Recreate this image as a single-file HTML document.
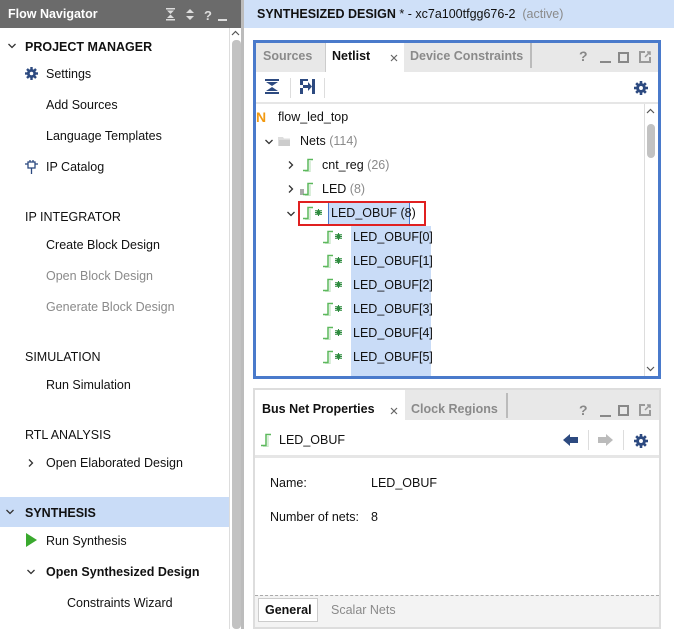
<!DOCTYPE html>
<html><head><style>
*{margin:0;padding:0;box-sizing:border-box}
body{width:674px;height:629px;overflow:hidden;background:#fff;font-family:"Liberation Sans",Arial,sans-serif;font-size:12.5px;color:#111;position:relative}
.a{position:absolute;white-space:nowrap}
.b{font-weight:bold}
.g{color:#8a8a8a}
</style></head><body>
<svg width="0" height="0" style="position:absolute">
<defs>
<symbol id="gear" viewBox="0 0 13 13"><circle cx="6.5" cy="6.5" r="4.5" fill="#2d4a80"/><g stroke="#2d4a80" stroke-width="2.4"><line x1="6.5" y1="0" x2="6.5" y2="13"/><line x1="0" y1="6.5" x2="13" y2="6.5"/><line x1="2" y1="2" x2="11" y2="11"/><line x1="11" y1="2" x2="2" y2="11"/></g><circle cx="6.5" cy="6.5" r="1.8" fill="#fff"/></symbol>
<symbol id="down" viewBox="0 0 10 10"><path d="M1.5 3 L5 6.5 L8.5 3" fill="none" stroke="#333" stroke-width="1.3"/></symbol>
<symbol id="right" viewBox="0 0 10 10"><path d="M3 1.5 L6.5 5 L3 8.5" fill="none" stroke="#333" stroke-width="1.3"/></symbol>
<symbol id="net" viewBox="0 0 12 14"><path d="M0 12.5 H5 V1.5 H10" fill="none" stroke="#5cb85c" stroke-width="1.5"/><path d="M2 14 H7 V3" fill="none" stroke="#b5deb5" stroke-width="1"/></symbol>
<symbol id="bug" viewBox="0 0 8 8"><g stroke="#2e8b3e" stroke-width="1.2"><line x1="0" y1="2" x2="8" y2="2"/><line x1="0" y1="4" x2="8" y2="4"/><line x1="0" y1="6" x2="8" y2="6"/><line x1="4" y1="0" x2="4" y2="8"/></g><circle cx="4" cy="4" r="2.2" fill="#2e8b3e"/></symbol>
</defs></svg>
<!-- left panel -->
<div class="a" style="left:0;top:0;width:242px;height:28px;background:#6b6b6b"></div>
<div class="a b" style="left:8px;top:7px;color:#fff;font-size:12.5px">Flow Navigator</div>
<svg class="a" style="left:166px;top:8px" width="62" height="13">
<g fill="#ddd"><rect x="0" y="0" width="9" height="1.5"/><rect x="0" y="11" width="9" height="1.5"/><polygon points="1,2.5 8,2.5 4.5,6"/><polygon points="1,10 8,10 4.5,6.5"/>
<polygon points="20,5 24,1 28,5"/><polygon points="20,8 24,12 28,8"/></g>
<text x="38" y="12" fill="#ddd" font-size="13" font-weight="bold" font-family="Liberation Sans">?</text>
<rect x="52" y="11" width="9" height="2" fill="#ddd"/></svg>
<div class="a" style="left:229px;top:28px;width:13px;height:601px;background:#fff;border-left:1px solid #ddd"></div>
<div class="a" style="left:232px;top:40px;width:9px;height:589px;background:#c2c2c2;border-radius:4px"></div>
<svg class="a" style="left:231px;top:30px" width="9" height="6"><path d="M1 5 L4.5 1.5 L8 5" fill="none" stroke="#555" stroke-width="1.2"/></svg>
<div class="a" style="left:241px;top:0;width:3px;height:629px;background:#bcbcbc"></div>

<svg class="a" style="left:7px;top:41px" width="10" height="10"><use href="#down"/></svg>
<div class="a b" style="left:25px;top:40px">PROJECT MANAGER</div>
<svg class="a" style="left:25px;top:67px" width="13" height="13"><use href="#gear"/></svg>
<div class="a" style="left:46px;top:67px">Settings</div>
<div class="a" style="left:46px;top:98px">Add Sources</div>
<div class="a" style="left:46px;top:129px">Language Templates</div>
<svg class="a" style="left:25px;top:160px" width="13" height="14"><g stroke="#2d4a80" stroke-width="1.3" fill="none"><rect x="3" y="2" width="7" height="6"/><line x1="6.5" y1="8" x2="6.5" y2="14"/><line x1="0" y1="4" x2="3" y2="4"/><line x1="10" y1="4" x2="13" y2="4"/><line x1="5" y1="0" x2="5" y2="2"/><line x1="8" y1="0" x2="8" y2="2"/></g></svg>
<div class="a" style="left:46px;top:160px">IP Catalog</div>
<div class="a" style="left:25px;top:210px">IP INTEGRATOR</div>
<div class="a" style="left:46px;top:238px">Create Block Design</div>
<div class="a g" style="left:46px;top:269px">Open Block Design</div>
<div class="a g" style="left:46px;top:300px">Generate Block Design</div>
<div class="a" style="left:25px;top:350px">SIMULATION</div>
<div class="a" style="left:46px;top:378px">Run Simulation</div>
<div class="a" style="left:25px;top:428px">RTL ANALYSIS</div>
<svg class="a" style="left:26px;top:458px" width="10" height="10"><use href="#right"/></svg>
<div class="a" style="left:46px;top:456px">Open Elaborated Design</div>
<div class="a" style="left:0;top:497px;width:229px;height:30px;background:#c9dcf7"></div>
<svg class="a" style="left:5px;top:507px" width="10" height="10"><use href="#down"/></svg>
<div class="a b" style="left:25px;top:506px">SYNTHESIS</div>
<svg class="a" style="left:26px;top:533px" width="11" height="14"><polygon points="0,0 11,7 0,14" fill="#3aa92e"/></svg>
<div class="a" style="left:46px;top:534px">Run Synthesis</div>
<svg class="a" style="left:26px;top:567px" width="10" height="10"><use href="#down"/></svg>
<div class="a b" style="left:46px;top:565px">Open Synthesized Design</div>
<div class="a" style="left:67px;top:596px">Constraints Wizard</div>

<!-- top bar -->
<div class="a" style="left:244px;top:0;width:430px;height:28px;background:#cfe0f8"></div>
<div class="a" style="left:257px;top:7px"><b>SYNTHESIZED DESIGN</b> * - xc7a100tfgg676-2 <span class="g">&nbsp;(active)</span></div>

<!-- netlist panel -->
<div class="a" style="left:253px;top:40px;width:408px;height:339px;border:3px solid #4a7acb;background:#fff"></div>
<div class="a" style="left:256px;top:43px;width:402px;height:29px;background:#e8e8e8"></div>
<div class="a" style="left:326px;top:43px;width:78px;height:29px;background:#fff"></div>
<div class="a" style="left:325px;top:43px;width:1px;height:29px;background:#ccc"></div>
<div class="a" style="left:530px;top:43px;width:2px;height:25px;background:#bbb"></div>
<div class="a b g" style="left:263px;top:49px">Sources</div>
<div class="a b" style="left:332px;top:49px">Netlist</div>
<svg class="a" style="left:390px;top:54px" width="8" height="8"><path d="M1 1 L7 7 M7 1 L1 7" stroke="#666" stroke-width="1.2"/></svg>
<div class="a b g" style="left:410px;top:49px">Device Constraints</div>
<div class="a b" style="left:579px;top:48px;color:#888;font-size:14px">?</div>
<div class="a" style="left:600px;top:61px;width:11px;height:2px;background:#888"></div>
<div class="a" style="left:618px;top:52px;width:11px;height:11px;border:2px solid #888"></div>
<svg class="a" style="left:639px;top:51px" width="12" height="12"><path d="M6 1 H1 V11 H11 V6" fill="none" stroke="#999" stroke-width="2"/><path d="M6 6 L11 1 M8 1 H11 V4" fill="none" stroke="#999" stroke-width="1.5"/></svg>
<svg class="a" style="left:265px;top:79px" width="14" height="15"><g fill="#2d4a80"><rect x="0" y="0" width="14" height="2"/><rect x="0" y="13" width="14" height="2"/><polygon points="1,3 13,3 7,7"/><polygon points="1,12 13,12 7,8"/></g></svg>
<div class="a" style="left:290px;top:78px;width:1px;height:20px;background:#ddd"></div>
<svg class="a" style="left:300px;top:79px" width="15" height="15"><g fill="#2d4a80"><rect x="0" y="0" width="3" height="6"/><rect x="0" y="9" width="3" height="6"/><rect x="12" y="0" width="3" height="15"/><rect x="3" y="6" width="6" height="3"/><polygon points="8,3 12,7.5 8,12"/><rect x="3" y="0" width="5" height="2"/></g></svg>
<div class="a" style="left:324px;top:78px;width:1px;height:20px;background:#ddd"></div>
<svg class="a" style="left:634px;top:81px" width="14" height="14"><use href="#gear"/></svg>
<div class="a" style="left:256px;top:102px;width:402px;height:2px;background:#e6e6e6"></div>
<div class="a" style="left:644px;top:104px;width:14px;height:272px;border-left:1px solid #ddd;background:#fff"></div>
<div class="a" style="left:647px;top:124px;width:8px;height:34px;background:#c2c2c2;border-radius:4px"></div>
<svg class="a" style="left:646px;top:108px" width="9" height="6"><path d="M1 5 L4.5 1.5 L8 5" fill="none" stroke="#555" stroke-width="1.2"/></svg>
<svg class="a" style="left:646px;top:366px" width="9" height="6"><path d="M1 1 L4.5 4.5 L8 1" fill="none" stroke="#555" stroke-width="1.2"/></svg>
<div class="a" style="left:351px;top:226px;width:80px;height:150px;background:#c9dcf7"></div>

<div class="a b" style="left:256px;top:109px;color:#f29a12;font-size:14px">N</div>
<div class="a" style="left:278px;top:110px">flow_led_top</div>
<svg class="a" style="left:264px;top:137px" width="10" height="10"><use href="#down"/></svg>
<svg class="a" style="left:278px;top:136px" width="13" height="11"><path d="M0 1 H5 L6 2.5 H12 V10 H0 Z" fill="#ddd"/><rect x="1" y="4" width="11" height="6" fill="#ccc"/></svg>
<div class="a" style="left:300px;top:134px">Nets <span class="g">(114)</span></div>
<svg class="a" style="left:286px;top:160px" width="10" height="10"><use href="#right"/></svg>
<svg class="a" style="left:303px;top:158px" width="12" height="14"><use href="#net"/></svg>
<div class="a" style="left:322px;top:158px">cnt_reg <span class="g">(26)</span></div>
<svg class="a" style="left:286px;top:184px" width="10" height="10"><use href="#right"/></svg>
<rect></rect>
<svg class="a" style="left:300px;top:182px" width="15" height="14"><rect x="0" y="7" width="4" height="6" fill="#aaa"/><svg x="3" width="12" height="14"><use href="#net"/></svg></svg>
<div class="a" style="left:322px;top:182px">LED <span class="g">(8)</span></div>
<svg class="a" style="left:286px;top:209px" width="10" height="10"><use href="#down"/></svg>
<div class="a" style="left:328px;top:203px;width:82px;height:22px;background:#c9dcf7;border-left:1px solid #4a7acb;border-right:1px solid #4a7acb"></div>
<div class="a" style="left:298px;top:201px;width:128px;height:25px;border:2px solid #e02020"></div>
<svg class="a" style="left:303px;top:206px" width="12" height="14"><use href="#net"/></svg><svg class="a" style="left:315px;top:209px" width="7" height="7"><use href="#bug"/></svg>
<div class="a" style="left:331px;top:206px">LED_OBUF (8)</div>

<svg class="a" style="left:323px;top:230px" width="12" height="14"><use href="#net"/></svg><svg class="a" style="left:335px;top:233px" width="7" height="7"><use href="#bug"/></svg><div class="a" style="left:353px;top:230px">LED_OBUF[0]</div>
<svg class="a" style="left:323px;top:254px" width="12" height="14"><use href="#net"/></svg><svg class="a" style="left:335px;top:257px" width="7" height="7"><use href="#bug"/></svg><div class="a" style="left:353px;top:254px">LED_OBUF[1]</div>
<svg class="a" style="left:323px;top:278px" width="12" height="14"><use href="#net"/></svg><svg class="a" style="left:335px;top:281px" width="7" height="7"><use href="#bug"/></svg><div class="a" style="left:353px;top:278px">LED_OBUF[2]</div>
<svg class="a" style="left:323px;top:302px" width="12" height="14"><use href="#net"/></svg><svg class="a" style="left:335px;top:305px" width="7" height="7"><use href="#bug"/></svg><div class="a" style="left:353px;top:302px">LED_OBUF[3]</div>
<svg class="a" style="left:323px;top:326px" width="12" height="14"><use href="#net"/></svg><svg class="a" style="left:335px;top:329px" width="7" height="7"><use href="#bug"/></svg><div class="a" style="left:353px;top:326px">LED_OBUF[4]</div>
<svg class="a" style="left:323px;top:350px" width="12" height="14"><use href="#net"/></svg><svg class="a" style="left:335px;top:353px" width="7" height="7"><use href="#bug"/></svg><div class="a" style="left:353px;top:350px">LED_OBUF[5]</div>

<!-- properties panel -->
<div class="a" style="left:253px;top:388px;width:408px;height:241px;border:2px solid #ddd;background:#fff"></div>
<div class="a" style="left:255px;top:390px;width:404px;height:30px;background:#e8e8e8"></div>
<div class="a" style="left:255px;top:390px;width:150px;height:30px;background:#fff"></div>
<div class="a" style="left:506px;top:393px;width:2px;height:25px;background:#bbb"></div>
<div class="a b" style="left:262px;top:402px">Bus Net Properties</div>
<svg class="a" style="left:390px;top:407px" width="8" height="8"><path d="M1 1 L7 7 M7 1 L1 7" stroke="#666" stroke-width="1.2"/></svg>
<div class="a b g" style="left:411px;top:402px">Clock Regions</div>
<div class="a b" style="left:579px;top:402px;color:#888;font-size:14px">?</div>
<div class="a" style="left:600px;top:415px;width:11px;height:2px;background:#888"></div>
<div class="a" style="left:618px;top:405px;width:11px;height:11px;border:2px solid #888"></div>
<svg class="a" style="left:639px;top:404px" width="12" height="12"><path d="M6 1 H1 V11 H11 V6" fill="none" stroke="#999" stroke-width="2"/><path d="M6 6 L11 1 M8 1 H11 V4" fill="none" stroke="#999" stroke-width="1.5"/></svg>
<svg class="a" style="left:261px;top:433px" width="12" height="14"><use href="#net"/></svg>
<div class="a" style="left:279px;top:433px">LED_OBUF</div>
<svg class="a" style="left:563px;top:434px" width="16" height="12"><polygon points="0,6 7,0 7,3 15,3 15,9 7,9 7,12" fill="#2d4a80"/></svg>
<div class="a" style="left:588px;top:430px;width:1px;height:20px;background:#ddd"></div>
<svg class="a" style="left:598px;top:434px" width="16" height="12"><polygon points="15,6 8,0 8,3 0,3 0,9 8,9 8,12" fill="#bbb"/></svg>
<div class="a" style="left:623px;top:430px;width:1px;height:20px;background:#ddd"></div>
<svg class="a" style="left:634px;top:434px" width="14" height="14"><use href="#gear"/></svg>
<div class="a" style="left:255px;top:455px;width:404px;height:3px;background:#e6e6e6"></div>
<div class="a" style="left:270px;top:476px">Name:</div>
<div class="a" style="left:371px;top:476px">LED_OBUF</div>
<div class="a" style="left:270px;top:510px">Number of nets:</div>
<div class="a" style="left:371px;top:510px">8</div>
<div class="a" style="left:255px;top:595px;width:404px;height:32px;background:#f3f3f3;border-top:1px dashed #aaa"></div>
<div class="a" style="left:258px;top:598px;width:60px;height:24px;background:#fff;border:1px solid #ccc"></div>
<div class="a b" style="left:265px;top:603px">General</div>
<div class="a g" style="left:331px;top:603px">Scalar Nets</div>
</body></html>
